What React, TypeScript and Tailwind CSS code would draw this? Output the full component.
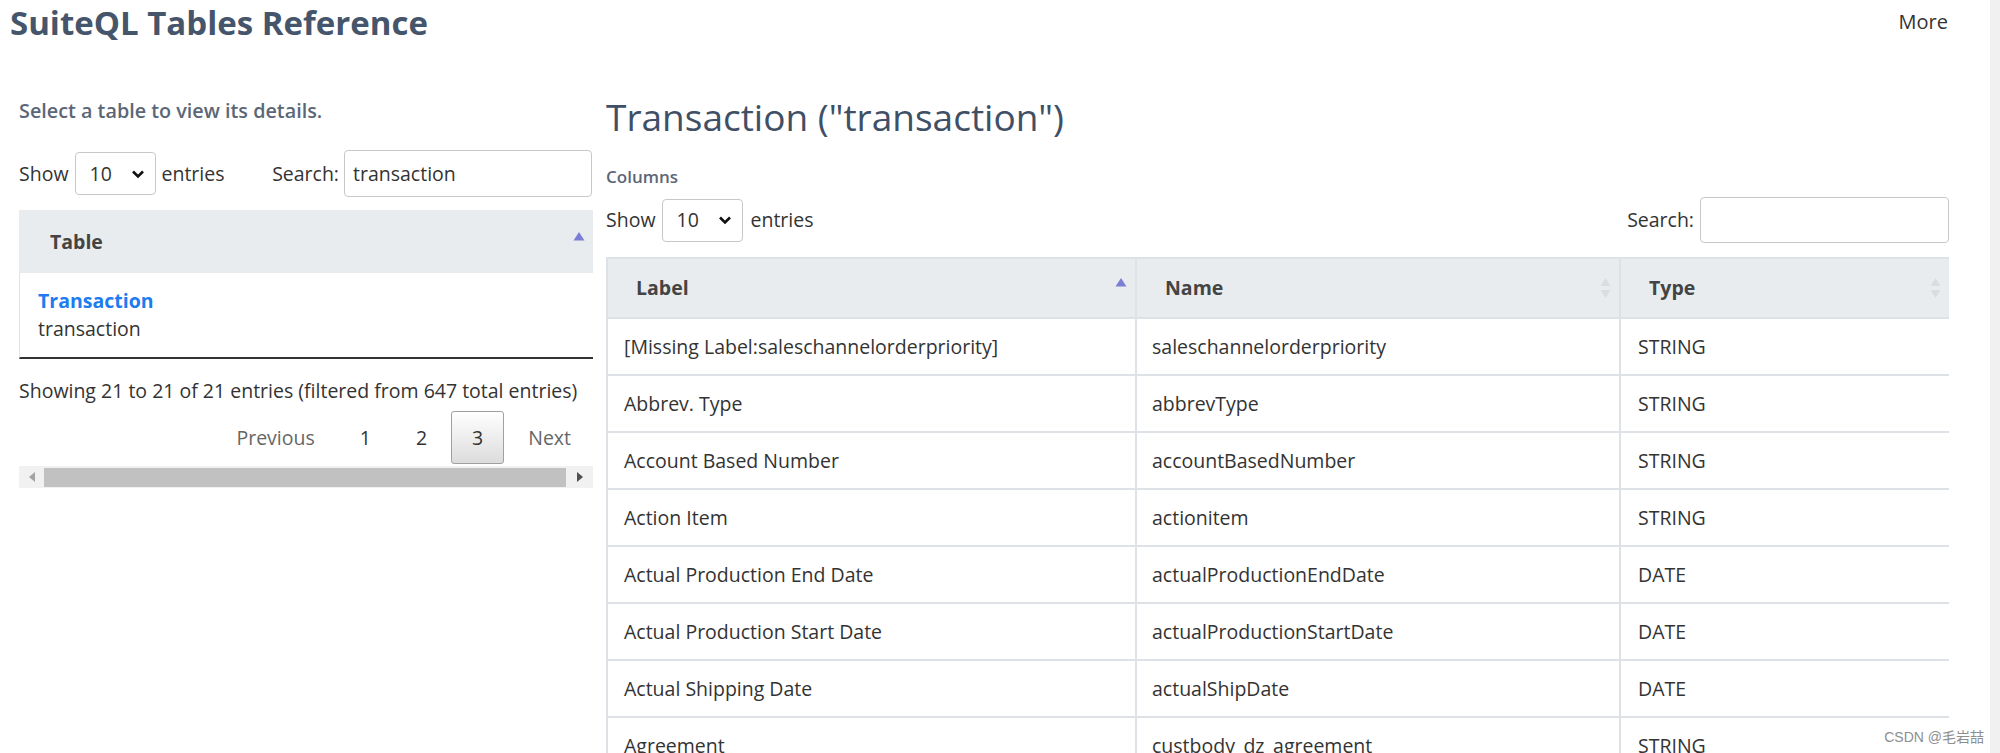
import React from "react";

const rows: [string, string, string][] = [
  ["[Missing Label:saleschannelorderpriority]", "saleschannelorderpriority", "STRING"],
  ["Abbrev. Type", "abbrevType", "STRING"],
  ["Account Based Number", "accountBasedNumber", "STRING"],
  ["Action Item", "actionitem", "STRING"],
  ["Actual Production End Date", "actualProductionEndDate", "DATE"],
  ["Actual Production Start Date", "actualProductionStartDate", "DATE"],
  ["Actual Shipping Date", "actualShipDate", "DATE"],
  ["Agreement", "custbody_dz_agreement", "STRING"],
];

function SortAsc() {
  return (
    <svg width="12" height="22" viewBox="0 0 12 22" className="shrink-0">
      <path d="M6 1 L11.5 9.5 H0.5 Z" fill="#7b7ed6" />
    </svg>
  );
}

function SortBoth() {
  return (
    <svg width="11" height="22" viewBox="0 0 11 22" className="shrink-0">
      <path d="M5.5 1 L10.5 9 H0.5 Z" fill="#dadde0" />
      <path d="M5.5 21 L10.5 13 H0.5 Z" fill="#dadde0" />
    </svg>
  );
}

function LengthSelect({ className }: { className?: string }) {
  return (
    <div
      className={`flex h-[43px] w-[81px] items-center justify-between rounded-[4px] border border-[#c8c8c8] bg-white pl-[14px] pr-[10px] ${className ?? ""}`}
    >
      <span>10</span>
      <svg width="14" height="10" viewBox="0 0 14 10">
        <path d="M2 2.5 L7 7.5 L12 2.5" fill="none" stroke="#111" strokeWidth="2.6" />
      </svg>
    </div>
  );
}

function PageButton({ label, current, muted }: { label: string; current?: boolean; muted?: boolean }) {
  return (
    <div
      className={`flex h-[53px] min-w-[53px] items-center justify-center rounded-[3px] border px-[20px] ${
        current
          ? "border-[#a0a0a0] bg-gradient-to-b from-white to-[#dcdcdc] text-[#333]"
          : "border-transparent"
      } ${muted ? "text-[#666]" : "text-[#333]"}`}
    >
      {label}
    </div>
  );
}

export default function App() {
  return (
    <div className="relative flex h-[753px] w-[2000px] overflow-hidden bg-white font-['Open_Sans',sans-serif] text-[19.5px] text-[#333]">
      <div className="flex w-[1990px] flex-col">
        {/* top bar */}
        <div className="flex h-[48px] items-start justify-between pl-[10px] pr-[42px]">
          <h1 className="text-[33px] font-bold leading-[45px] text-[#45556b]">SuiteQL Tables Reference</h1>
          <span className="mt-[8px] text-[20px] leading-[28px] text-[#333]">More</span>
        </div>

        <div className="flex gap-[13px] pl-[19px]">
          {/* left: table list */}
          <div className="flex w-[574px] flex-col">
            <p className="mt-[52px] text-[19.8px] font-semibold leading-[28px] text-[#5b6777]">Select a table to view its details.</p>

            <div className="mt-[25px] flex h-[47px] items-center justify-between pr-[1px]">
              <div className="flex items-center">
                <span>Show</span>
                <LengthSelect className="ml-[6px]" />
                <span className="ml-[6px]">entries</span>
              </div>
              <div className="flex items-center">
                <span>Search:</span>
                <div className="ml-[5px] flex h-[47px] w-[248px] items-center rounded-[4px] border border-[#c8c8c8] pl-[8px]">
                  transaction
                </div>
              </div>
            </div>

            <div className="mt-[13px] flex h-[63px] items-center justify-between bg-[#e9ecef] pl-[31px] pr-[8px]">
              <span className="font-bold text-[#444]">Table</span>
              <SortAsc />
            </div>
            <div className="flex h-[86px] flex-col justify-center border-b-2 border-l border-b-[#333] border-l-[#e1e4e8] pl-[18px] leading-[28px]">
              <span className="font-bold text-[#1c7cf0]">Transaction</span>
              <span>transaction</span>
            </div>

            <p className="mt-[18px] leading-[28px]">Showing 21 to 21 of 21 entries (filtered from 647 total entries)</p>

            <div className="mt-[6px] flex justify-end gap-[3px] pr-[1px]">
              <PageButton label="Previous" muted />
              <PageButton label="1" />
              <PageButton label="2" />
              <PageButton label="3" current />
              <PageButton label="Next" muted />
            </div>

            <div className="mt-[2px] flex h-[22px] items-center bg-[#f1f1f1]">
              <div className="flex w-[25px] justify-center">
                <svg width="6" height="10" viewBox="0 0 6 10">
                  <path d="M6 0 V10 L0 5 Z" fill="#a3a3a3" />
                </svg>
              </div>
              <div className="h-[19px] flex-1 bg-[#c1c1c1]" />
              <div className="flex w-[27px] justify-center">
                <svg width="6" height="10" viewBox="0 0 6 10">
                  <path d="M0 0 V10 L6 5 Z" fill="#505050" />
                </svg>
              </div>
            </div>
          </div>

          {/* right: table details */}
          <div className="flex w-[1343px] flex-col">
            <h2 className="mt-[49px] text-[37px] font-medium leading-[45px] text-[#3f4f66]">Transaction ("transaction")</h2>
            <p className="mt-[26px] text-[17px] font-semibold leading-[24px] text-[#5b6777]">Columns</p>

            <div className="mt-[8px] flex h-[46px] items-center justify-between">
              <div className="flex items-center">
                <span>Show</span>
                <LengthSelect className="ml-[6px]" />
                <span className="ml-[8px]">entries</span>
              </div>
              <div className="flex items-center">
                <span>Search:</span>
                <div className="ml-[6px] h-[46px] w-[249px] rounded-[4px] border border-[#c8c8c8]" />
              </div>
            </div>

            <div className="mt-[14px] flex flex-col border-l-2 border-[#dee2e6]">
              <div className="grid h-[62px] grid-cols-[529px_484px_328px] border-y-2 border-[#dee2e6] bg-[#e9ecef] font-bold text-[#444]">
                <div className="flex items-center justify-between border-r-2 border-[#dee2e6] pl-[28px] pr-[8px]">
                  <span>Label</span>
                  <SortAsc />
                </div>
                <div className="flex items-center justify-between border-r-2 border-[#dee2e6] pl-[28px] pr-[8px]">
                  <span>Name</span>
                  <SortBoth />
                </div>
                <div className="flex items-center justify-between pl-[28px] pr-[8px]">
                  <span>Type</span>
                  <SortBoth />
                </div>
              </div>
              {rows.map(([label, name, type]) => (
                <div key={name} className="grid h-[57px] shrink-0 grid-cols-[529px_484px_328px] border-b-2 border-[#dee2e6]">
                  <div className="flex items-center border-r-2 border-[#dee2e6] pl-[16px]">{label}</div>
                  <div className="flex items-center border-r-2 border-[#dee2e6] pl-[15px]">{name}</div>
                  <div className="flex items-center pl-[17px]">{type}</div>
                </div>
              ))}
            </div>
          </div>
        </div>
      </div>

      {/* page scrollbar track */}
      <div className="w-[10px] bg-[#f0f0f0]" />

      <span className="absolute bottom-[5px] right-[16px] font-['Liberation_Sans','Noto_Sans_CJK_SC',sans-serif] text-[14px] text-[#8e8e8e]">
        CSDN @毛岩喆
      </span>
    </div>
  );
}
